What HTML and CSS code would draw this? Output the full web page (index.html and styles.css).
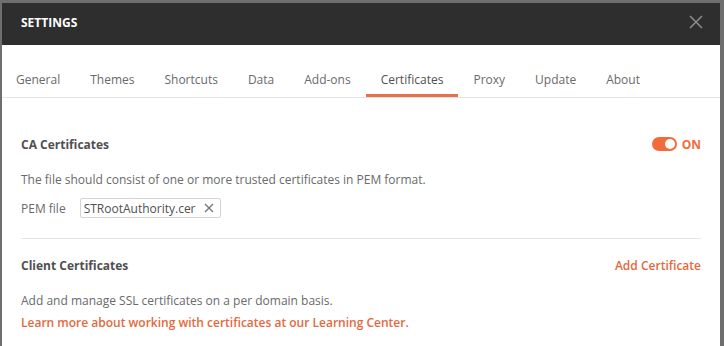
FILE: index.html
```html
<!DOCTYPE html>
<html>
<head>
<meta charset="utf-8">
<link rel="stylesheet" href="styles.css">
</head>
<body>
<div class="modal">
  <div class="header">
    <span class="title">SETTINGS</span>
    <svg class="close" width="14" height="14" viewBox="0 0 14 14"><path d="M1 1L13 13M13 1L1 13" stroke="#8a8a8a" stroke-width="1.6" fill="none"/></svg>
  </div>
  <div class="tabs">
    <div class="tab first">General</div>
    <div class="tab">Themes</div>
    <div class="tab">Shortcuts</div>
    <div class="tab">Data</div>
    <div class="tab">Add-ons</div>
    <div class="tab active">Certificates</div>
    <div class="tab">Proxy</div>
    <div class="tab">Update</div>
    <div class="tab">About</div>
  </div>
  <div class="content">
    <div class="section">
      <div class="row-head">
        <span class="heading">CA Certificates</span>
        <span class="toggle-wrap"><span class="toggle"><span class="knob"></span></span><span class="on">ON</span></span>
      </div>
      <p class="desc">The file should consist of one or more trusted certificates in PEM format.</p>
      <div class="pem">
        <span class="label">PEM file</span>
        <span class="file">STRootAuthority.cer
          <svg class="fx" width="10" height="10" viewBox="0 0 10 10"><path d="M1 1L9 9M9 1L1 9" stroke="#777" stroke-width="1.4" fill="none"/></svg>
        </span>
      </div>
    </div>
    <div class="section second">
      <div class="row-head">
        <span class="heading">Client Certificates</span>
        <span class="add">Add Certificate</span>
      </div>
      <p class="desc2">Add and manage SSL certificates on a per domain basis.</p>
      <p class="link">Learn more about working with certificates at our Learning Center.</p>
    </div>
  </div>
</div>
</body>
</html>
```
FILE: styles.css
```css
html, body {
  margin: 0;
  padding: 0;
}
body {
  background: #6e6e6e;
  width: 724px;
  height: 346px;
  overflow: hidden;
  font-family: "Open Sans", "Liberation Sans", sans-serif;
}
.modal {
  margin: 3px 0 0 2px;
  width: 718px;
  height: 343px;
  background: #fff;
}
.header {
  height: 42px;
  background: #2e2e2e;
  display: flex;
  align-items: center;
  justify-content: space-between;
  padding: 0 17px 4px 19px;
  box-sizing: border-box;
}
.title {
  color: #fff;
  font-weight: 700;
  font-size: 12px;
}
.close {
  display: block;
}
.tabs {
  display: flex;
  height: 52px;
  align-items: flex-end;
  border-bottom: 1px solid #e4e4e4;
}
.tab {
  padding: 0 15px;
  height: 30px;
  font-size: 12px;
  color: #6a6a6a;
  line-height: 26px;
  box-sizing: border-box;
}
.tab.first {
  padding-left: 14px;
}
.tab.active {
  color: #505050;
  border-bottom: 3px solid #e5704a;
}
.content {
  padding: 0 19px;
}
.section {
  padding-top: 36px;
  padding-bottom: 20px;
  border-bottom: 1px solid #e6e6e6;
}
.section.second {
  border-bottom: none;
  padding-top: 16px;
}
.row-head {
  display: flex;
  justify-content: space-between;
  align-items: center;
  height: 20px;
}
.heading {
  font-weight: 700;
  font-size: 12px;
  color: #505050;
}
.toggle-wrap {
  display: flex;
  align-items: center;
  gap: 5px;
}
.toggle {
  width: 25px;
  height: 14px;
  border-radius: 7px;
  background: #f26b3a;
  position: relative;
}
.knob {
  position: absolute;
  right: 2px;
  top: 2px;
  width: 10px;
  height: 10px;
  border-radius: 50%;
  background: #fff;
}
.on {
  color: #f26b3a;
  font-weight: 700;
  font-size: 12px;
}
.desc {
  margin: 17px 0 0;
  font-size: 12px;
  color: #6a6a6a;
  line-height: 18px;
}
.pem {
  display: flex;
  align-items: center;
  margin-top: 9px;
  gap: 14px;
}
.label {
  font-size: 12px;
  color: #6a6a6a;
}
.file {
  display: flex;
  align-items: center;
  gap: 8px;
  border: 1px solid #d4d4d4;
  border-radius: 2px;
  height: 20px;
  padding: 0 6px 0 3px;
  box-sizing: border-box;
  font-size: 12px;
  color: #505050;
}
.fx {
  display: block;
}
.add {
  color: #e5683c;
  font-size: 12px;
  font-weight: 600;
}
.desc2 {
  margin: 17px 0 0;
  font-size: 12px;
  color: #6a6a6a;
  line-height: 18px;
}
.link {
  margin: 4px 0 0;
  font-size: 12px;
  color: #e5683c;
  font-weight: 600;
  line-height: 18px;
}
```
